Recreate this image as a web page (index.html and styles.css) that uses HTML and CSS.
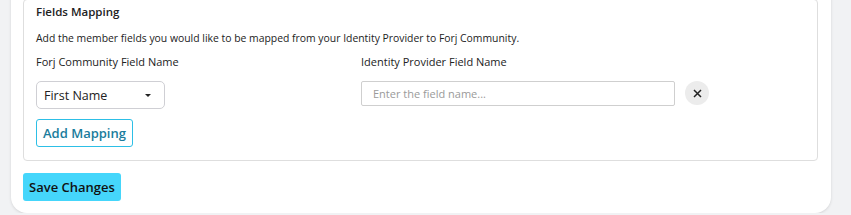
FILE: index.html
```html
<!DOCTYPE html>
<html lang="en">
<head>
  <meta charset="UTF-8" />
  <meta name="viewport" content="width=device-width, initial-scale=1.0"/>
  <title>Fields Mapping</title>
  <link rel="stylesheet" href="styles.css">
</head>
<body>

  <div class="card">
    <div class="mapping-box">
      <p class="mapping-title">Fields Mapping</p>
      <p class="mapping-desc">Add the member fields you would like to be mapped from your Identity Provider to Forj Community.</p>

      <div class="mapping-grid">
        <label class="field-label">Forj Community Field Name</label>
        <label class="field-label">Identity Provider Field Name</label>
        <span></span>

        <div class="select">
          <span>First Name</span>
          <span class="caret"></span>
        </div>
        <input type="text" class="field-input" placeholder="Enter the field name...">
        <button class="remove-btn" type="button">
          <svg width="9" height="9" viewBox="0 0 9 9">
            <path d="M1 1 L8 8 M8 1 L1 8" stroke="#222" stroke-width="1.5"/>
          </svg>
        </button>
      </div>

      <button class="add-btn" type="button">Add Mapping</button>
    </div>

    <button class="save-btn" type="button">Save Changes</button>
  </div>

</body>
</html>
```

FILE: styles.css
```css
body {
  font-family: "Open Sans", Arial, sans-serif;
  background-color: #f1f2f4;
  color: #222;
  margin: 0;
  padding: 0;
}

.card {
  width: 795px;
  margin: -20px 0 0 11px;
  padding: 19px 13px 12px 12px;
  background-color: #fff;
  border-radius: 0 0 16px 16px;
  box-shadow: 0 1px 3px rgba(0, 0, 0, 0.12);
}

.mapping-box {
  border: 1px solid #dedede;
  border-radius: 4px;
  padding: 2px 13px 13px 12px;
}

.mapping-title {
  font-size: 11.5px;
  font-weight: 600;
  line-height: 20px;
  margin: 0;
}

.mapping-desc {
  font-size: 10.4px;
  line-height: 20px;
  margin: 6px 0 0;
}

.mapping-grid {
  display: grid;
  grid-template-columns: 325px 314px 24px;
  column-gap: 0;
  row-gap: 11px;
  margin-top: 6px;
  align-items: start;
}

.field-label {
  font-size: 11px;
  line-height: 16px;
}

.select {
  width: 129px;
  height: 28px;
  box-sizing: border-box;
  border: 1px solid #cfcfd4;
  border-radius: 5px;
  display: flex;
  align-items: center;
  justify-content: space-between;
  padding: 0 13px 0 7px;
  font-size: 12.5px;
}

.caret {
  width: 0;
  height: 0;
  border-left: 3px solid transparent;
  border-right: 3px solid transparent;
  border-top: 3.5px solid #222;
  margin-top: 1px;
}

.field-input {
  width: 314px;
  height: 25px;
  box-sizing: border-box;
  border: 1px solid #cfcfcf;
  border-radius: 2px;
  padding: 0 11px;
  font-family: inherit;
  font-size: 11px;
  color: #222;
  margin: 0;
}

.field-input::placeholder {
  color: #9a9a9a;
}

.remove-btn {
  width: 24px;
  height: 24px;
  border: none;
  border-radius: 50%;
  background-color: #ececec;
  padding: 0;
  margin-left: 10px;
  display: flex;
  align-items: center;
  justify-content: center;
  cursor: pointer;
}

.add-btn {
  margin-top: 10px;
  height: 28px;
  padding: 0 6px;
  border: 1px solid #2dbfe6;
  border-radius: 3px;
  background-color: #fff;
  color: #1a7c9c;
  font-family: inherit;
  font-size: 13px;
  font-weight: 600;
  cursor: pointer;
}

.save-btn {
  margin-top: 12px;
  height: 28px;
  padding: 0 6px;
  border: none;
  border-radius: 3px;
  background-color: #45d6fb;
  color: #111;
  font-family: inherit;
  font-size: 13px;
  font-weight: 600;
  cursor: pointer;
}
```
